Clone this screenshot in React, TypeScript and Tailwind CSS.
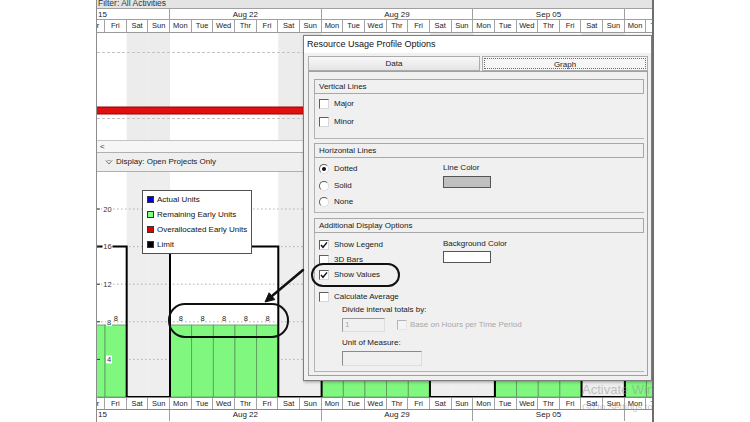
import type { ReactNode } from "react";

const DAY_W = 21.66;
const X0 = -13.64;
const ZERO = 225;
const UNIT = 9.4;
const NAMES = ["Thr", "Fri", "Sat", "Sun", "Mon", "Tue", "Wed"];

type Day = { label: string; weekend: boolean; off: boolean; x: number };

// Thu Aug 18 .. Tue Sep 13; Mon Sep 05 is a holiday
const days: Day[] = Array.from({ length: 27 }, (_, i) => {
  const label = NAMES[i % 7];
  const weekend = label === "Sat" || label === "Sun";
  return { label, weekend, off: weekend || i === 18, x: X0 + i * DAY_W };
});

function DayRow({ top }: { top?: boolean }) {
  return (
    <div
      className={
        top
          ? "-ml-[13.64px] flex h-[13px] shrink-0 border-b border-[#9a9a9a] bg-white"
          : "-ml-[13.64px] flex h-[13px] shrink-0 border-t border-b border-[#8a8a8a] bg-white"
      }
    >
      {days.map((d, i) => (
        <div
          key={i}
          className="w-[21.66px] shrink-0 border-r border-[#a4a4a4] text-center text-[7.5px] leading-[12px] text-[#222]"
        >
          {d.label}
        </div>
      ))}
    </div>
  );
}

function MonthRow({ top }: { top?: boolean }) {
  return (
    <div
      className={
        top
          ? "flex h-[12px] shrink-0 border-t border-b border-[#a0a0a0] bg-white text-[8px] leading-[11px] text-[#222]"
          : "flex h-[11px] shrink-0 bg-white text-[8px] leading-[10px] text-[#222]"
      }
    >
      <div className="w-[73px] shrink-0 border-r border-[#a0a0a0] pl-[1px]">15</div>
      {["Aug 22", "Aug 29", "Sep 05"].map((m) => (
        <div key={m} className="w-[151.62px] shrink-0 border-r border-[#a0a0a0] text-center">
          {m}
        </div>
      ))}
      <div className="flex-1" />
    </div>
  );
}

function TopPane() {
  return (
    <div className="h-[107px] shrink-0 bg-white">
      <svg width="555" height="107" className="block">
        {days
          .filter((d) => d.weekend)
          .map((d, i) => (
            <rect key={i} x={d.x} y={0} width={DAY_W} height={107} fill="#ececec" />
          ))}
        <line x1={0} x2={555} y1={19.5} y2={19.5} stroke="#c4c4c4" strokeDasharray="3 2" />
        <line x1={0} x2={555} y1={85.5} y2={85.5} stroke="#c4c4c4" strokeDasharray="3 2" />
        <rect x={-2} y={74} width={560} height={7} fill="#e01010" stroke="#9a0000" strokeWidth={1} />
      </svg>
    </div>
  );
}

function Legend() {
  const items = [
    { color: "bg-[#0000dd]", label: "Actual Units" },
    { color: "bg-[#80ff80]", label: "Remaining Early Units" },
    { color: "bg-[#e00000]", label: "Overallocated Early Units" },
    { color: "bg-black", label: "Limit" },
  ];
  return (
    <div className="absolute left-[45px] top-[18px] flex h-[64px] w-[110px] flex-col border border-[#505050] bg-white pl-[4px] pt-[1px]">
      {items.map((item) => (
        <div key={item.label} className="flex h-[15px] items-center">
          <span className={`h-[7px] w-[7px] border border-[#333] ${item.color}`} />
          <span className="ml-[3px] whitespace-nowrap text-[8px] text-[#111]">{item.label}</span>
        </div>
      ))}
    </div>
  );
}

function Chart() {
  const limitY = (d: Day) => (d.off ? ZERO : ZERO - 16 * UNIT);
  let limit = `M ${X0} ${limitY(days[0])}`;
  days.forEach((d) => {
    limit += ` L ${d.x} ${limitY(d)} L ${d.x + DAY_W} ${limitY(d)}`;
  });

  const axis = [
    { v: 20, t: "20", x: 10.5 },
    { v: 16, t: "16", x: 10.5 },
    { v: 12, t: "12", x: 10.5 },
    { v: 8, t: "8", x: 12 },
    { v: 4, t: "4", x: 12 },
  ];

  return (
    <div className="relative h-[225px] shrink-0 bg-white">
      <svg width="555" height="225" className="block">
        {days
          .filter((d) => d.off)
          .map((d, i) => (
            <rect key={i} x={d.x} y={0} width={DAY_W} height={225} fill="#eeeeee" />
          ))}
        {axis.map((a) => (
          <line
            key={a.v}
            x1={0}
            x2={555}
            y1={ZERO - a.v * UNIT}
            y2={ZERO - a.v * UNIT}
            stroke="#b0b0b0"
            strokeDasharray="1.5 2.5"
          />
        ))}
        {days
          .filter((d) => !d.off)
          .map((d, i) => (
            <rect
              key={i}
              x={d.x}
              y={ZERO - 72}
              width={DAY_W}
              height={72}
              fill="#80f880"
              stroke="#5c965c"
              strokeWidth={0.8}
            />
          ))}
        {days
          .filter((d) => !d.off)
          .map((d, i) => (
            <text
              key={i}
              x={d.x + DAY_W / 2}
              y={149}
              fontSize={7.5}
              textAnchor="middle"
              fill="#222"
            >
              8
            </text>
          ))}
        <path d={limit} fill="none" stroke="#000" strokeWidth={2} />
        {axis.map((a) => (
          <g key={a.t}>
            <line x1={0} x2={3} y1={ZERO - a.v * UNIT} y2={ZERO - a.v * UNIT} stroke="#333" />
            <rect
              x={a.x - (a.t.length === 2 ? 5 : 3)}
              y={ZERO - a.v * UNIT - 4}
              width={a.t.length === 2 ? 10 : 6}
              height={8}
              fill="#fff"
            />
            <text
              x={a.x}
              y={ZERO - a.v * UNIT + 2.7}
              fontSize={7.5}
              textAnchor="middle"
              fill="#333"
            >
              {a.t}
            </text>
          </g>
        ))}
      </svg>
      <Legend />
    </div>
  );
}

function CheckBox({ checked, disabled }: { checked?: boolean; disabled?: boolean }) {
  return (
    <span
      className={
        disabled
          ? "flex h-[10px] w-[10px] shrink-0 items-center justify-center border border-t-[#b4b4b4] border-l-[#b4b4b4] border-b-[#e6e6e6] border-r-[#e6e6e6] bg-[#f4f4f4]"
          : "flex h-[10px] w-[10px] shrink-0 items-center justify-center border border-t-[#5e5e5e] border-l-[#5e5e5e] border-b-[#d8d8d8] border-r-[#d8d8d8] bg-white"
      }
    >
      {checked && (
        <svg viewBox="0 0 8 8" className="h-[8px] w-[8px]">
          <path d="M1 4 L3 6.3 L7 1.4" fill="none" stroke="#111" strokeWidth={1.4} />
        </svg>
      )}
    </span>
  );
}

function Radio({ checked }: { checked?: boolean }) {
  return (
    <span className="flex h-[10px] w-[10px] shrink-0 items-center justify-center rounded-full border border-t-[#5e5e5e] border-l-[#5e5e5e] border-b-[#dcdcdc] border-r-[#dcdcdc] bg-white">
      {checked && <span className="h-[4px] w-[4px] rounded-full bg-[#111]" />}
    </span>
  );
}

function Row({ control, label, muted }: { control: ReactNode; label: string; muted?: boolean }) {
  return (
    <div className="flex h-[10px] items-center">
      {control}
      <span
        className={
          muted
            ? "ml-[3px] whitespace-nowrap text-[8px] text-[#a8a8a8]"
            : "ml-[5px] whitespace-nowrap text-[8px] text-[#1a1a1a]"
        }
      >
        {label}
      </span>
    </div>
  );
}

function Group({ title, height, children }: { title: string; height: string; children: ReactNode }) {
  return (
    <div className="flex flex-col">
      <div className="h-[15px] border border-[#a8a8a8] bg-[#f0f0f0] pl-[4px] text-[8px] leading-[13px] text-[#1a1a1a]">
        {title}
      </div>
      <div className={`${height} border-b border-l border-[#b4b4b4]`}>{children}</div>
    </div>
  );
}

function Dialog() {
  return (
    <div className="absolute left-[206px] top-[35px] h-[346px] w-[349px] border border-[#7d7d7d] bg-[#f0f0f0] shadow-[1px_1px_3px_rgba(0,0,0,0.35)]">
      <div className="h-[17px] bg-white pl-[3px] text-[9px] leading-[17px] text-[#111]">
        Resource Usage Profile Options
      </div>
      <div className="pl-[4px] pr-[3px] pt-[3px]">
        <div className="flex h-[15px] gap-[2px]">
          <div className="w-[172px] border border-[#acacac] bg-gradient-to-b from-[#f8f8f8] to-[#e4e4e4] text-center text-[8px] leading-[13px] text-[#1a1a1a]">
            Data
          </div>
          <div className="w-[166px] border border-[#acacac] bg-[#f6f6f6] p-[1px]">
            <div className="h-full border border-dotted border-[#6a6a6a] text-center text-[8px] leading-[11px] text-[#1a1a1a]">
              Graph
            </div>
          </div>
        </div>
        <div className="flex h-[305px] w-[340px] flex-col border border-[#a0a0a0] pl-[5px] pr-[3px] pt-[7px]">
          <Group title="Vertical Lines" height="h-[45px]">
            <div className="flex flex-col gap-[8px] pl-[4px] pt-[5px]">
              <Row control={<CheckBox />} label="Major" />
              <Row control={<CheckBox />} label="Minor" />
            </div>
          </Group>
          <div className="h-[4px]" />
          <Group title="Horizontal Lines" height="h-[55px]">
            <div className="flex">
              <div className="flex w-[128px] flex-col gap-[6.5px] pl-[4px] pt-[6px]">
                <Row control={<Radio checked />} label="Dotted" />
                <Row control={<Radio />} label="Solid" />
                <Row control={<Radio />} label="None" />
              </div>
              <div className="flex flex-col pt-[5px]">
                <span className="h-[10px] text-[8px] leading-[10px] text-[#1a1a1a]">Line Color</span>
                <span className="mt-[3px] h-[12px] w-[48px] border border-[#555] bg-[#c0c0c0]" />
              </div>
            </div>
          </Group>
          <div className="h-[5px]" />
          <Group title="Additional Display Options" height="h-[139px]">
            <div className="flex">
              <div className="flex w-[128px] flex-col gap-[5px] pl-[4px] pt-[7px]">
                <Row control={<CheckBox checked />} label="Show Legend" />
                <Row control={<CheckBox />} label="3D Bars" />
                <Row control={<CheckBox checked />} label="Show Values" />
              </div>
              <div className="flex flex-col pt-[6px]">
                <span className="h-[10px] text-[8px] leading-[10px] text-[#1a1a1a]">Background Color</span>
                <span className="mt-[2px] h-[12px] w-[48px] border border-[#555] bg-white" />
              </div>
            </div>
            <div className="mt-[12px] pl-[4px]">
              <Row control={<CheckBox />} label="Calculate Average" />
            </div>
            <div className="flex flex-col pl-[27px]">
              <span className="mt-[3px] h-[10px] text-[8px] leading-[10px] text-[#1a1a1a]">
                Divide interval totals by:
              </span>
              <div className="mt-[3px] flex h-[14px] items-center">
                <div className="h-[14px] w-[43px] border border-t-[#9a9a9a] border-l-[#9a9a9a] border-b-[#dedede] border-r-[#dedede] bg-[#f0f0f0] pl-[2px] text-[8px] leading-[12px] text-[#a8a8a8]">
                  1
                </div>
                <div className="ml-[12px]">
                  <Row control={<CheckBox disabled />} label="Base on Hours per Time Period" muted />
                </div>
              </div>
              <span className="mt-[6px] h-[10px] text-[8px] leading-[10px] text-[#1a1a1a]">Unit of Measure:</span>
              <div className="mt-[3px] h-[15px] w-[80px] border border-t-[#8a8a8a] border-l-[#8a8a8a] border-b-[#dedede] border-r-[#dedede] bg-[#f0f0f0]" />
            </div>
          </Group>
        </div>
      </div>
    </div>
  );
}

function Annotations() {
  return (
    <>
      <div className="absolute left-[71px] top-[303px] h-[35px] w-[121px] rounded-[17px] border-[2.5px] border-[#111]" />
      <div className="absolute left-[214px] top-[263px] h-[24px] w-[89px] rounded-full border-2 border-[#111]" />
      <svg width="555" height="422" className="pointer-events-none absolute left-0 top-0">
        <line x1={206} y1={270} x2={175} y2={296} stroke="#111" strokeWidth={2.5} strokeLinecap="round" />
        <polygon points="168,302 177.8,299.6 172.1,292.8" fill="#111" stroke="#111" strokeWidth={1} strokeLinejoin="round" />
      </svg>
      <div className="pointer-events-none absolute left-[485px] top-[383px] flex flex-col leading-none text-[rgba(150,150,150,0.55)]">
        <span className="whitespace-nowrap text-[13px]">Activate Windows</span>
        <span className="mt-[6px] whitespace-nowrap text-[9.5px]">Go to Settings to activate Windows.</span>
      </div>
    </>
  );
}

export default function App() {
  return (
    <div className="flex h-[422px] w-[750px] justify-center bg-white font-['Liberation_Sans',Arial,sans-serif]">
      <div className="relative flex h-[422px] w-[558px] flex-col overflow-hidden border-l border-r-2 border-l-[#8c8c8c] border-r-[#6e6e6e] bg-white">
        <div className="h-[8px] shrink-0 overflow-hidden bg-[#e4e4e4] pl-[1px]">
          <div className="-mt-[2px] text-[8.5px] leading-[10px] text-[#333]">Filter: All Activities</div>
        </div>
        <MonthRow top />
        <DayRow top />
        <TopPane />
        <div className="flex h-[12px] shrink-0 items-center border-t border-[#c4c4c4] bg-[#f6f6f6] pl-[3px] text-[8px] text-[#333]">
          &lt;
        </div>
        <div className="flex h-[20px] shrink-0 items-center border-t border-b border-[#b0b0b0] bg-[#efefef] pl-[8px] text-[8px] text-[#222]">
          <svg viewBox="0 0 8 7" className="h-[7px] w-[8px]">
            <polyline points="0.8,1.5 4,5 7.2,1.5" fill="none" stroke="#777" strokeWidth={1} />
            <line x1={2.2} x2={5.8} y1={1.5} y2={1.5} stroke="#999" strokeWidth={0.8} />
          </svg>
          <span className="ml-[3px]">Display: Open Projects Only</span>
        </div>
        <Chart />
        <DayRow />
        <MonthRow />
        <Dialog />
        <Annotations />
      </div>
    </div>
  );
}
